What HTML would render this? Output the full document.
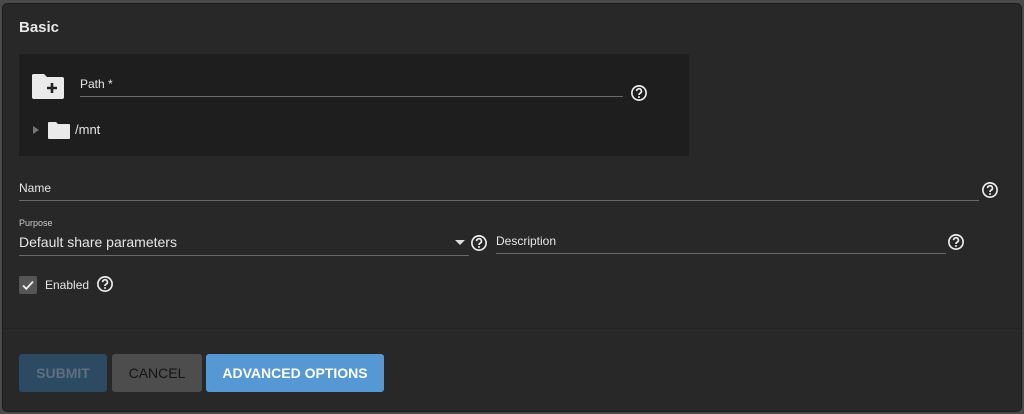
<!DOCTYPE html>
<html><head><style>
*{box-sizing:border-box;margin:0;padding:0}
html,body{width:1024px;height:414px;overflow:hidden;background:#4a4a4a;font-family:"Liberation Sans",Arial,sans-serif;color:#ddd}
.card{position:absolute;left:2px;top:3px;width:1020px;height:409px;background:#282828;border-radius:5px;border:1px solid #1c1c1c}
.w{position:absolute;left:-3px;top:-4px;width:1024px;height:414px}
.abs{position:absolute}
.t{font-size:13px;color:#e6e6e6}
.line{position:absolute;height:1px;background:#6a6a6a}
.q{position:absolute;width:18px;height:18px}
.btn{position:absolute;top:354px;height:38px;border-radius:3px;font-size:14px;font-weight:bold;display:flex;align-items:center;justify-content:center}
</style></head><body>
<svg width="0" height="0" style="position:absolute"><defs>
<symbol id="q" viewBox="0 0 24 24"><circle cx="12" cy="12" r="9.5" fill="none" stroke="#eee" stroke-width="2.2"/><path d="M8.8 9.5a3.2 3.2 0 1 1 4.6 2.9c-1 .5-1.4 1.1-1.4 2.3" fill="none" stroke="#eee" stroke-width="2.2"/><circle cx="12" cy="17.3" r="1.3" fill="#eee"/></symbol>
</defs></svg>
<div class="card"><div class="w">
<div class="abs" style="left:19px;top:19px;font-size:15px;font-weight:bold;color:#e8e8e8">Basic</div>
<div class="abs" style="left:19px;top:54px;width:670px;height:102px;background:#1e1e1e"></div>
<svg class="abs" style="left:31px;top:72px" width="34" height="28" viewBox="0 0 34 28"><path d="M2 2h11l3 3h15a2 2 0 0 1 2 2v18a2 2 0 0 1-2 2H3a2 2 0 0 1-2-2V3z" fill="#eaeaea"/><path d="M21 11v10M16 16h10" stroke="#222" stroke-width="2.6"/></svg>
<div class="abs t" style="left:80px;top:77px;font-size:12px">Path *</div>
<div class="line" style="left:80px;top:96px;width:543px"></div>
<svg class="q" style="left:630px;top:84px"><use href="#q"/></svg>
<div class="abs" style="left:33px;top:126px;width:0;height:0;border-left:6px solid #777;border-top:4px solid transparent;border-bottom:4px solid transparent"></div>
<svg class="abs" style="left:48px;top:122px" width="22" height="17" viewBox="0 0 22 17"><path d="M0 1a1 1 0 0 1 1-1h7l2 2h11a1 1 0 0 1 1 1v13a1 1 0 0 1-1 1H1a1 1 0 0 1-1-1z" fill="#eaeaea"/></svg>
<div class="abs t" style="left:75px;top:122px">/mnt</div>
<div class="abs t" style="left:19px;top:181px;font-size:12px">Name</div>
<div class="line" style="left:19px;top:200px;width:960px"></div>
<svg class="q" style="left:981px;top:181px"><use href="#q"/></svg>
<div class="abs" style="left:19px;top:218px;font-size:9px;color:#ccc">Purpose</div>
<div class="abs" style="left:19px;top:234px;font-size:14px;color:#e6e6e6">Default share parameters</div>
<div class="abs" style="left:455px;top:240px;width:0;height:0;border-top:5px solid #ddd;border-left:5px solid transparent;border-right:5px solid transparent"></div>
<div class="line" style="left:19px;top:255px;width:450px"></div>
<svg class="q" style="left:470px;top:234px"><use href="#q"/></svg>
<div class="abs t" style="left:496px;top:234px;font-size:12px">Description</div>
<div class="line" style="left:496px;top:253px;width:450px"></div>
<svg class="q" style="left:947px;top:233px"><use href="#q"/></svg>
<div class="abs" style="left:19px;top:276px;width:18px;height:18px;background:#555;border-radius:2px"></div>
<svg class="abs" style="left:19px;top:276px" width="18" height="18"><path d="M4 9.5l3.3 3.3L14 5.5" fill="none" stroke="#eee" stroke-width="1.8"/></svg>
<div class="abs t" style="left:45px;top:278px;font-size:12px">Enabled</div>
<svg class="q" style="left:96px;top:275px"><use href="#q"/></svg>
<div class="abs" style="left:3px;top:328px;width:1018px;height:1px;background:#232323"></div>
<div class="btn" style="left:19px;width:88px;background:#2d4a63;color:#5d6f80">SUBMIT</div>
<div class="btn" style="left:112px;width:90px;background:#4d4d4d;color:#141414;font-weight:normal">CANCEL</div>
<div class="btn" style="left:206px;width:178px;background:#5598d4;color:#fff">ADVANCED OPTIONS</div>
</div></div>
</body></html>
